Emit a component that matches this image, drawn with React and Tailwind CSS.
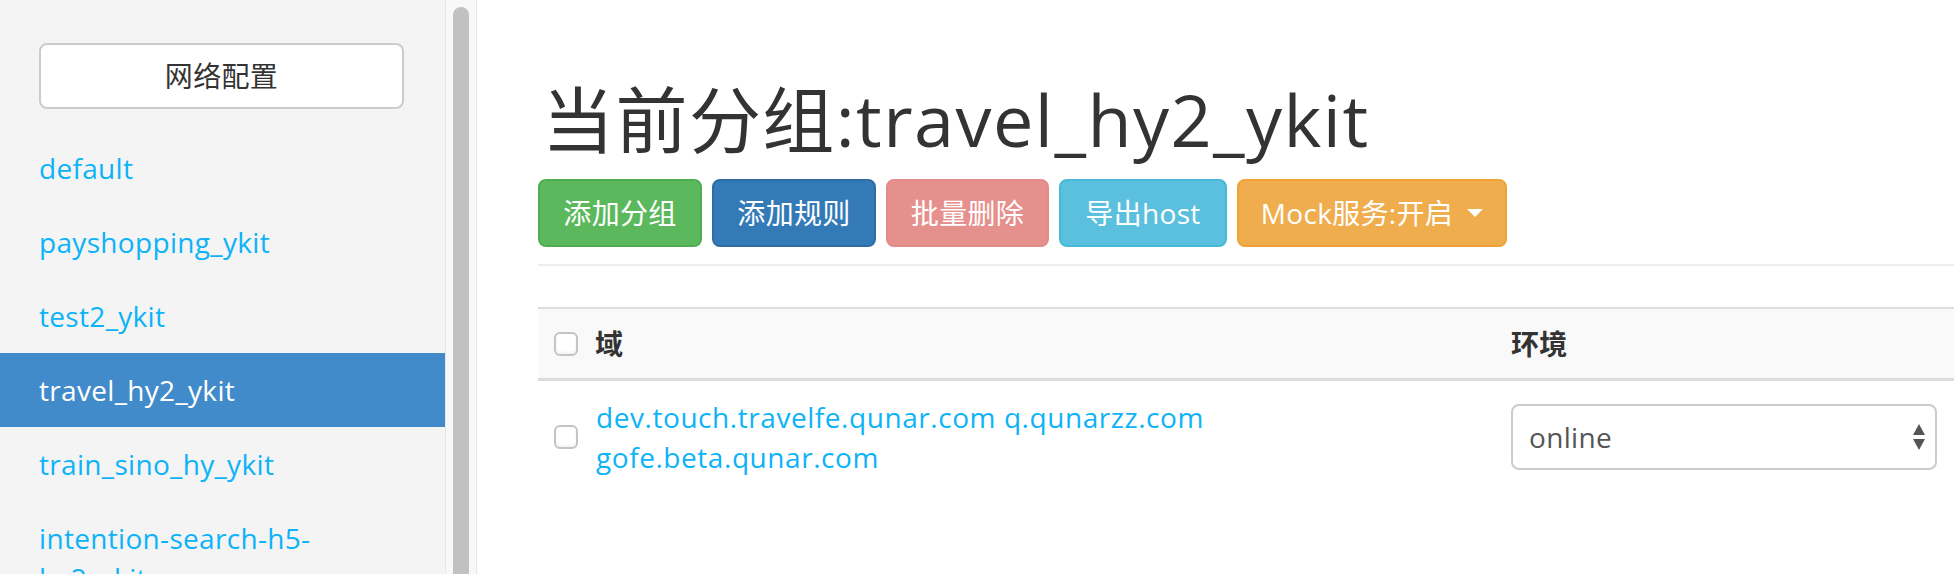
import React from "react";

const groups = [
  "default",
  "payshopping_ykit",
  "test2_ykit",
  "travel_hy2_ykit",
  "train_sino_hy_ykit",
  "intention-search-h5-hy2_ykit",
];

const font = {
  fontFamily: '"Open Sans", "Noto Sans CJK SC", sans-serif',
};

const Checkbox = () => (
  <span className="inline-block w-[24px] h-[24px] shrink-0 rounded-[6px] border-2 border-[#c4c4c4] bg-white shadow-[inset_0_-2px_3px_rgba(0,0,0,0.05)]" />
);

const btn =
  "h-[68px] flex items-center justify-center whitespace-nowrap rounded-[8px] border-2 text-white text-[28px] leading-[40px]";

export default function App() {
  const active = "travel_hy2_ykit";

  return (
    <div
      className="flex h-[574px] w-[1954px] overflow-hidden bg-white text-[#333] tracking-[0.02em]"
      style={font}
    >
      {/* sidebar */}
      <aside className="w-[446px] shrink-0 bg-[#f4f4f4] border-r border-[#e6e6e6] flex flex-col">
        <div className="pl-[39px] pr-[41px] pt-[43px] pb-[22px]">
          <button className="w-full h-[66px] rounded-[8px] border-2 border-[#cccccc] bg-white text-[28px] text-[#333]">
            网络配置
          </button>
        </div>
        <ul>
          {groups.map((g) => (
            <li
              key={g}
              className={
                g === active
                  ? "pl-[39px] pr-[39px] py-[17px] text-[28px] leading-[40px] bg-[#428bca] text-white"
                  : "pl-[39px] pr-[39px] py-[17px] text-[28px] leading-[40px] text-[#0db3f7]"
              }
            >
              {g}
            </li>
          ))}
        </ul>
      </aside>

      {/* scrollbar */}
      <div className="w-[31px] shrink-0 bg-[#f8f8f8] border-r border-[#e8e8e8] pl-[7px] pr-[7px] pt-[7px] flex">
        <div className="w-[16px] flex-1 rounded-t-full bg-[#c1c1c1]" />
      </div>

      {/* main */}
      <main className="flex-1 min-w-0 pl-[61px] pt-[80px]">
        <h1 className="ml-[4px] text-[72px] leading-[79px] font-normal text-[#333] tracking-[0.02em] whitespace-nowrap">
          当前分组:travel_hy2_ykit
        </h1>

        <div className="flex gap-[10px] mt-[20px]">
          <button className={`${btn} w-[164px] bg-[#5cb85c] border-[#4cae4c]`}>添加分组</button>
          <button className={`${btn} w-[164px] bg-[#337ab7] border-[#2e6da4]`}>添加规则</button>
          <button className={`${btn} w-[163px] bg-[#e6908d] border-[#e38b88]`}>批量删除</button>
          <button className={`${btn} w-[168px] bg-[#5bc0de] border-[#46b8da]`}>导出host</button>
          <button className={`${btn} w-[270px] bg-[#f0ad4e] border-[#eea236]`}>
            Mock服务:开启
            <span className="ml-[14px] inline-block w-0 h-0 border-l-[8px] border-r-[8px] border-t-[8px] border-l-transparent border-r-transparent border-t-white" />
          </button>
        </div>

        <div className="mt-[17px] h-[2px] bg-[#eeeeee]" />

        <div className="mt-[41px]">
          <div className="flex bg-[#f9f9f9] border-t-2 border-b-[3px] border-[#dddddd] h-[74px]">
            <div className="w-[957px] shrink-0 px-[16px] flex items-center gap-[17px]">
              <Checkbox />
              <span className="text-[28px] font-bold">域</span>
            </div>
            <div className="flex-1 px-[16px] flex items-center">
              <span className="text-[28px] font-bold">环境</span>
            </div>
          </div>

          <div className="flex py-[16px]">
            <div className="w-[957px] shrink-0 px-[16px] flex items-center gap-[18px]">
              <Checkbox />
              <div className="text-[28px] leading-[40px] text-[#0db3f7] tracking-[0.02em]">
                dev.touch.travelfe.qunar.com q.qunarzz.com
                <br />
                gofe.beta.qunar.com
              </div>
            </div>
            <div className="flex-1 px-[16px] flex items-center">
              <div className="w-[426px] h-[66px] rounded-[8px] border-2 border-[#cccccc] bg-white flex items-center justify-between pl-[16px] pr-[10px]">
                <span className="text-[28px] text-[#555]">online</span>
                <svg width="12" height="26" viewBox="0 0 12 26">
                  <path d="M6 0 L12 11 L0 11 Z" fill="#555" />
                  <path d="M0 15 L12 15 L6 26 Z" fill="#555" />
                </svg>
              </div>
            </div>
          </div>
        </div>
      </main>
    </div>
  );
}
